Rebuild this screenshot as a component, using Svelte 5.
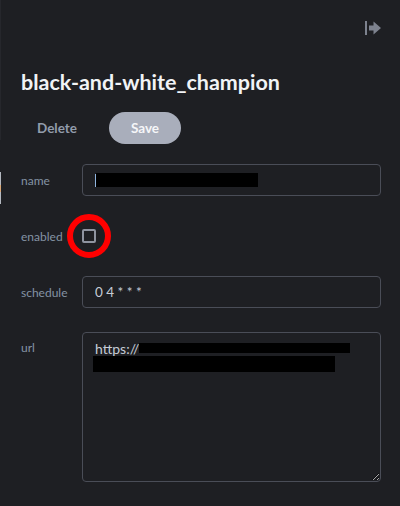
<script>
	let name = $state('');
	let enabled = $state(false);
	let schedule = $state('0 4 * * *');
	let url = $state('https://');
</script>

<div class="panel">
	<span class="edge-line"></span>
	<span class="edge-mark"></span>
	<button class="collapse" aria-label="Collapse">
		<svg width="16" height="14" viewBox="0 0 16 14">
			<rect x="0" y="0" width="2" height="14" fill="currentColor" />
			<path d="M4 4.5h4.500V0.500L16 7l-7.500 6.500V9.500H4z" fill="currentColor" />
		</svg>
	</button>

	<h2>black-and-white_champion</h2>

	<div class="actions">
		<button class="delete">Delete</button>
		<button class="save">Save</button>
	</div>

	<form class="fields">
		<div class="field">
			<label for="name">name</label>
			<div class="control">
				<input id="name" type="text" bind:value={name} />
				<span class="caret"></span>
				<span class="redact name-redact"></span>
			</div>
		</div>
		<div class="field check">
			<label for="enabled">enabled</label>
			<div class="control">
				<input id="enabled" type="checkbox" bind:checked={enabled} />
				<span class="ring"></span>
			</div>
		</div>
		<div class="field">
			<label for="schedule">schedule</label>
			<div class="control">
				<input id="schedule" class="cron" type="text" bind:value={schedule} />
			</div>
		</div>
		<div class="field top">
			<label for="url">url</label>
			<div class="control">
				<textarea id="url" bind:value={url}></textarea>
				<span class="redact url-redact-1"></span>
				<span class="redact url-redact-2"></span>
			</div>
		</div>
	</form>
</div>

<style>
	:global(body) {
		background: #1e1f23;
	}

	.panel {
		position: relative;
		box-sizing: border-box;
		height: 506px;
		overflow: hidden;
		padding: 0 19px 0 21px;
		background: #1e1f23;
		font-family: 'Lato', 'Noto Sans', sans-serif;
		color: #9aa5b4;
	}

	.edge-line {
		position: absolute;
		left: 0;
		top: 0;
		width: 1px;
		height: 140px;
		background: #26272c;
	}

	.edge-mark {
		position: absolute;
		left: 0;
		top: 172px;
		width: 1px;
		height: 32px;
		background: linear-gradient(#b4b8c0 0 13px, #d8a878 13px 20px, #b4b8c0 20px);
	}

	.collapse {
		display: block;
		margin: 21px 0 0 auto;
		padding: 0;
		width: 16px;
		height: 14px;
		border: none;
		background: none;
		color: #7d828e;
	}

	.collapse svg {
		display: block;
	}

	h2 {
		margin: 32px 0 0;
		font-size: 21.5px;
		line-height: 30px;
		font-weight: 700;
		color: #f1f3f6;
	}

	.actions {
		display: flex;
		align-items: center;
		gap: 16px;
		margin: 15px 0 0;
	}

	.actions button {
		height: 32px;
		width: 72px;
		padding: 0;
		border: none;
		border-radius: 16px;
		font-family: inherit;
		font-size: 13.5px;
		font-weight: 700;
	}

	.delete {
		background: none;
		color: #929cab;
	}

	.save {
		background: #a9aebb;
		color: #f5f6f8;
	}

	.fields {
		display: flex;
		flex-direction: column;
		gap: 24px;
		margin-top: 20px;
	}

	.field {
		display: flex;
		align-items: center;
	}

	.field.top {
		align-items: flex-start;
	}

	.field.check {
		height: 32px;
	}

	label {
		flex: 0 0 61px;
		font-size: 12px;
		color: #8493a3;
	}

	.top label {
		padding-top: 8px;
	}

	.control {
		position: relative;
		flex: 1;
	}

	input[type='text'],
	textarea {
		display: block;
		box-sizing: border-box;
		width: 100%;
		padding: 0 12px;
		background: #1e1f23;
		border: 1px solid #4a4d57;
		border-radius: 4px;
		font-family: inherit;
		font-size: 14px;
		color: #c5ccd6;
		outline: none;
	}

	input[type='text'] {
		height: 32px;
	}

	input.cron {
		font-size: 13.5px;
	}

	textarea {
		height: 150px;
		padding-top: 7px;
		line-height: 18px;
		resize: vertical;
	}

	input[type='checkbox'] {
		display: block;
		appearance: none;
		box-sizing: border-box;
		width: 14px;
		height: 14px;
		margin: 0;
		background: transparent;
		border: 2px solid #8f94a0;
		border-radius: 2px;
	}

	.ring {
		position: absolute;
		left: -15px;
		top: -15px;
		box-sizing: border-box;
		width: 44px;
		height: 44px;
		border: 6px solid #ff0000;
		border-radius: 50%;
	}

	.caret {
		position: absolute;
		left: 13px;
		top: 10px;
		width: 1px;
		height: 13px;
		background: #8fb4de;
	}

	.redact {
		position: absolute;
		background: #000;
	}

	.name-redact {
		left: 14px;
		top: 9px;
		width: 162px;
		height: 14px;
	}

	.url-redact-1 {
		left: 57px;
		top: 11px;
		width: 211px;
		height: 10px;
	}

	.url-redact-2 {
		left: 11px;
		top: 24px;
		width: 242px;
		height: 16px;
	}
</style>
